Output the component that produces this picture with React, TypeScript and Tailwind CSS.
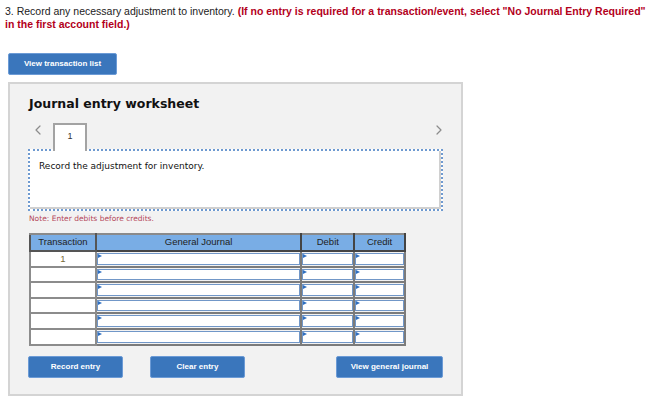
import { ChevronLeft, ChevronRight } from 'lucide-react';

const ROWS = 6;

function BlueButton({ label, className = '' }: { label: string; className?: string }) {
  return (
    <button
      type="button"
      className={`h-[22px] rounded-[2px] border border-[#6c9bd6] bg-[#3a76bc] text-[8px] font-bold text-white font-['Liberation_Sans',Arial,sans-serif] ${className}`}
    >
      {label}
    </button>
  );
}

function EntryCell() {
  return (
    <td className="border-2 border-[#7b7b7b] p-0">
      <div className="relative h-[11.5px] border border-[#7197c8] bg-white">
        <span className="absolute left-0 top-0 h-0 w-0 border-y-[2.5px] border-l-[4px] border-y-transparent border-l-[#2f6fc0]" />
      </div>
    </td>
  );
}

export default function App() {
  return (
    <div className="min-h-screen w-[672px] bg-white font-['Liberation_Sans',Arial,sans-serif]">
      <p className="px-[5px] pt-[5px] text-[10.5px] leading-[13px] text-[#222]">
        3. Record any necessary adjustment to inventory.{' '}
        <span className="font-bold text-[#b3001b]">
          (If no entry is required for a transaction/event, select "No Journal Entry Required"
          <br />
          in the first account field.)
        </span>
      </p>

      <BlueButton label="View transaction list" className="ml-[8px] mt-[22px] w-[109px]" />

      <div className="ml-[8px] mt-[7px] h-[314px] w-[455px] border-2 border-[#d4d4d4] bg-[#f2f2f2]">
        <h2 className="ml-[19px] mt-[12px] text-[12.5px] font-bold leading-[16px] text-[#111] font-['DejaVu_Sans',Verdana,sans-serif]">
          Journal entry worksheet
        </h2>

        <div className="mx-[18px] mt-[10px] flex items-end">
          <ChevronLeft size={16} strokeWidth={1.8} className="mb-[11px] ml-[2px] text-[#8c8c8c]" />
          <div className="relative z-10 ml-[7px] mb-[-2px] flex h-[28px] w-[34px] justify-center border-2 border-b-0 border-[#a3a3a3] bg-white pt-[5px] text-[9px] text-[#333]">
            1
          </div>
          <ChevronRight size={16} strokeWidth={1.8} className="mb-[11px] ml-auto mr-[-4px] text-[#8c8c8c]" />
        </div>

        <div className="mx-[18px] h-[62px] border-2 border-dotted border-[#6f9ad0] bg-white">
          <div className="h-full border-b-2 border-r-2 border-[#d0d0d0] px-[9px] pt-[9px] text-[9px] text-[#111] font-['DejaVu_Sans',Verdana,sans-serif]">
            Record the adjustment for inventory.
          </div>
        </div>

        <p className="ml-[19px] mt-[3px] text-[7.5px] leading-[10px] text-[#b5475a] font-['DejaVu_Sans',Verdana,sans-serif]">
          Note: Enter debits before credits.
        </p>

        <table className="ml-[19px] mt-[9px] w-[377px] border-collapse border-2 border-[#7b7b7b] text-[9.5px] text-[#222]">
          <colgroup>
            <col className="w-[66px]" />
            <col className="w-[207px]" />
            <col className="w-[53px]" />
            <col className="w-[51px]" />
          </colgroup>
          <thead>
            <tr className="h-[17px] bg-[#79ade5]">
              <th className="border-2 border-[#555] border-t-[#8a8a8a] font-normal">Transaction</th>
              <th className="border-2 border-[#444] border-t-[#8a8a8a] font-normal">General Journal</th>
              <th className="border-2 border-[#444] border-t-[#8a8a8a] font-normal">Debit</th>
              <th className="border-2 border-[#444] border-t-[#8a8a8a] font-normal">Credit</th>
            </tr>
          </thead>
          <tbody>
            {Array.from({ length: ROWS }, (_, i) => (
              <tr key={i} className="h-[15.6px]">
                <td className="border-2 border-[#8c8c8c] bg-white p-0 text-center leading-[11px] text-[#7a6a3a]">
                  {i === 0 ? '1' : ''}
                </td>
                <EntryCell />
                <EntryCell />
                <EntryCell />
              </tr>
            ))}
          </tbody>
        </table>

        <div className="ml-[18px] mt-[10px] flex">
          <BlueButton label="Record entry" className="w-[95px]" />
          <BlueButton label="Clear entry" className="ml-[27px] w-[95px]" />
          <BlueButton label="View general journal" className="ml-[91px] w-[107px]" />
        </div>
      </div>
    </div>
  );
}
